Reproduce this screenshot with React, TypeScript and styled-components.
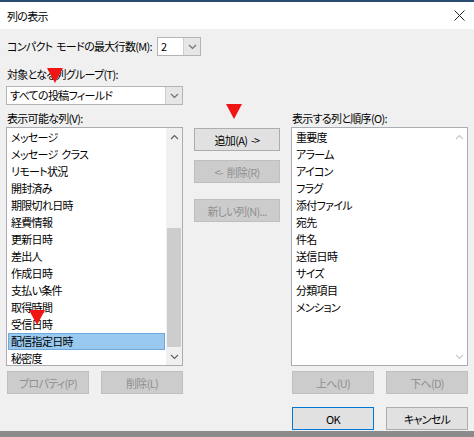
import React from 'react';
import styled, { createGlobalStyle } from 'styled-components';

const GlobalStyle = createGlobalStyle`
    html, body {
        margin: 0;
        padding: 0;
        background: #f0f0f0;
    }
`;

const available = [
    'メッセージ', 'メッセージ クラス', 'リモート状況', '開封済み', '期限切れ日時', '経費情報',
    '更新日時', '差出人', '作成日時', '支払い条件', '取得時間', '受信日時', '配信指定日時', '秘密度',
];
const shown = [
    '重要度', 'アラーム', 'アイコン', 'フラグ', '添付ファイル', '宛先', '件名', '送信日時', 'サイズ',
    '分類項目', 'メンション',
];

const Chevron = ({ up, color }: { up?: boolean; color: string }) => (
    <svg width="9" height="6" viewBox="0 0 9 6">
        <path d={up ? 'M1 5 L4.5 1.5 L8 5' : 'M1 1 L4.5 4.5 L8 1'} fill="none" stroke={color} strokeWidth="1.2" />
    </svg>
);

const Combo = ({ value, width }: { value: string; width: number }) => (
    <ComboBox style={{ width }}>
        <ComboValue>{value}</ComboValue>
        <ComboButton><Chevron color="#707070" /></ComboButton>
    </ComboBox>
);

type ListProps = { items: string[]; selected?: number; active?: boolean };

const ListBox = ({ items, selected, active }: ListProps) => (
    <List>
        <Items>
            {items.map((it, i) => (
                <Item key={it} $selected={i === selected}>{it}</Item>
            ))}
        </Items>
        <ScrollBar $active={active}>
            <ScrollArrow><Chevron up color={active ? '#606060' : '#c8c8c8'} /></ScrollArrow>
            <Track>{active && <Thumb />}</Track>
            <ScrollArrow><Chevron color={active ? '#606060' : '#c8c8c8'} /></ScrollArrow>
        </ScrollBar>
    </List>
);

export default function App() {
    return (
        <Window>
            <GlobalStyle />
            <TitleBar>
                <span>列の表示</span>
                <svg width="11" height="11" viewBox="0 0 11 11">
                    <path d="M0.5 0.5 L10.5 10.5 M10.5 0.5 L0.5 10.5" stroke="#222" strokeWidth="1" />
                </svg>
            </TitleBar>
            <Body>
                <Row>
                    <CompactLabel>コンパクト モードの最大行数(M):</CompactLabel>
                    <Combo value="2" width={44} />
                </Row>
                <GroupLabel>対象となる列グループ(T):</GroupLabel>
                <Combo value="すべての投稿フィールド" width={177} />
                <Columns>
                    <Column>
                        <Label>表示可能な列(V):</Label>
                        <ListBox items={available} selected={12} active />
                        <ButtonPair>
                            <Button disabled>プロパティ(P)</Button>
                            <Button disabled>削除(L)</Button>
                        </ButtonPair>
                    </Column>
                    <Middle>
                        <Button>追加(A) -&gt;</Button>
                        <Button disabled>&lt;- 削除(R)</Button>
                        <Button disabled $gap>新しい列(N)...</Button>
                    </Middle>
                    <Column>
                        <Label>表示する列と順序(O):</Label>
                        <ListBox items={shown} />
                        <ButtonPair>
                            <Button disabled>上へ(U)</Button>
                            <Button disabled>下へ(D)</Button>
                        </ButtonPair>
                        <ButtonPair $footer>
                            <Button $default>OK</Button>
                            <Button>キャンセル</Button>
                        </ButtonPair>
                    </Column>
                </Columns>
                <Marker style={{ left: 47, top: 39 }} />
                <Marker style={{ left: 226, top: 75 }} />
                <Marker style={{ left: 29, top: 281 }} />
            </Body>
            <BottomEdge />
        </Window>
    );
}

const Window = styled.div`
    width: 474px;
    height: 437px;
    display: flex;
    flex-direction: column;
    background: #f0f0f0;
    border-top: 2px solid #2b4a70;
    box-sizing: border-box;
    overflow: hidden;
    font-family: "Noto Sans CJK JP", "Noto Sans", sans-serif;
    font-size: 11px;
    letter-spacing: -0.7px;
    word-spacing: 2px;
    font-feature-settings: "palt";
    color: #000;
`;

const TitleBar = styled.div`
    height: 27px;
    background: #fff;
    display: flex;
    align-items: center;
    justify-content: space-between;
    padding: 0 9px 0 7px;
    flex-shrink: 0;
`;

const Body = styled.div`
    position: relative;
    flex: 1;
    padding: 8px 6px 0 6px;
    display: flex;
    flex-direction: column;
`;

const Row = styled.div`
    display: flex;
    align-items: center;
`;

const Label = styled.div`
    height: 17px;
    line-height: 17px;
    padding-left: 1px;
    white-space: nowrap;
`;

const CompactLabel = styled(Label)`
    width: 150px;
`;

const GroupLabel = styled(Label)`
    margin: 10px 0 3px;
`;

const ComboBox = styled.div`
    height: 19px;
    box-sizing: border-box;
    border: 1px solid #b4b4b4;
    background: #fff;
    display: flex;
`;

const ComboValue = styled.div`
    flex: 1;
    line-height: 17px;
    padding-left: 3px;
    white-space: nowrap;
`;

const ComboButton = styled.div`
    width: 16px;
    background: #e6e6e6;
    border-left: 1px solid #cfcfcf;
    display: flex;
    align-items: center;
    justify-content: center;
`;

const Columns = styled.div`
    display: grid;
    grid-template-columns: 177px 86px 177px;
    column-gap: 11px;
    margin-top: 5px;
`;

const Column = styled.div`
    display: flex;
    flex-direction: column;
`;

const Middle = styled.div`
    display: flex;
    flex-direction: column;
    gap: 9px;
    padding-top: 18px;
`;

const List = styled.div`
    height: 239px;
    box-sizing: border-box;
    border: 1px solid #abadb3;
    background: #fff;
    display: flex;
`;

const Items = styled.div`
    flex: 1;
    padding: 1px 1px 0 1px;
    overflow: hidden;
`;

const Item = styled.div<{ $selected?: boolean }>`
    height: 17px;
    line-height: 15px;
    padding-left: 2px;
    box-sizing: border-box;
    white-space: nowrap;
    background: ${p => (p.$selected ? '#99c9ef' : 'transparent')};
    border: 1px solid ${p => (p.$selected ? '#6ea8dc' : 'transparent')};
`;

const ScrollBar = styled.div<{ $active?: boolean }>`
    width: 16px;
    display: flex;
    flex-direction: column;
    background: ${p => (p.$active ? '#f0f0f0' : '#fff')};
`;

const ScrollArrow = styled.div`
    height: 17px;
    display: flex;
    align-items: center;
    justify-content: center;
`;

const Track = styled.div`
    flex: 1;
    display: flex;
    flex-direction: column;
    justify-content: flex-end;
`;

const Thumb = styled.div`
    height: 119px;
    margin: 0 1px 1px;
    background: #cdcdcd;
`;

const ButtonPair = styled.div<{ $footer?: boolean }>`
    display: grid;
    grid-template-columns: 82px 82px;
    justify-content: space-between;
    margin-top: ${p => (p.$footer ? '13px' : '5px')};
    padding-left: 1px;
`;

const Button = styled.button<{ $default?: boolean; $gap?: boolean }>`
    height: 23px;
    box-sizing: border-box;
    font: inherit;
    letter-spacing: inherit;
    word-spacing: inherit;
    font-feature-settings: "palt";
    padding: 0;
    background: #e1e1e1;
    color: #000;
    border: 1px solid ${p => (p.$default ? '#0078d7' : '#adadad')};
    margin-top: ${p => (p.$gap ? '7px' : '0')};

    &:disabled {
        background: #cccccc;
        border-color: #bfbfbf;
        color: #8f8f8f;
    }
`;

const Marker = styled.div`
    position: absolute;
    width: 0;
    height: 0;
    border-left: 8px solid transparent;
    border-right: 8px solid transparent;
    border-top: 15px solid #f01414;
`;

const BottomEdge = styled.div`
    height: 6px;
    background: #8a8a8a;
    flex-shrink: 0;
`;
